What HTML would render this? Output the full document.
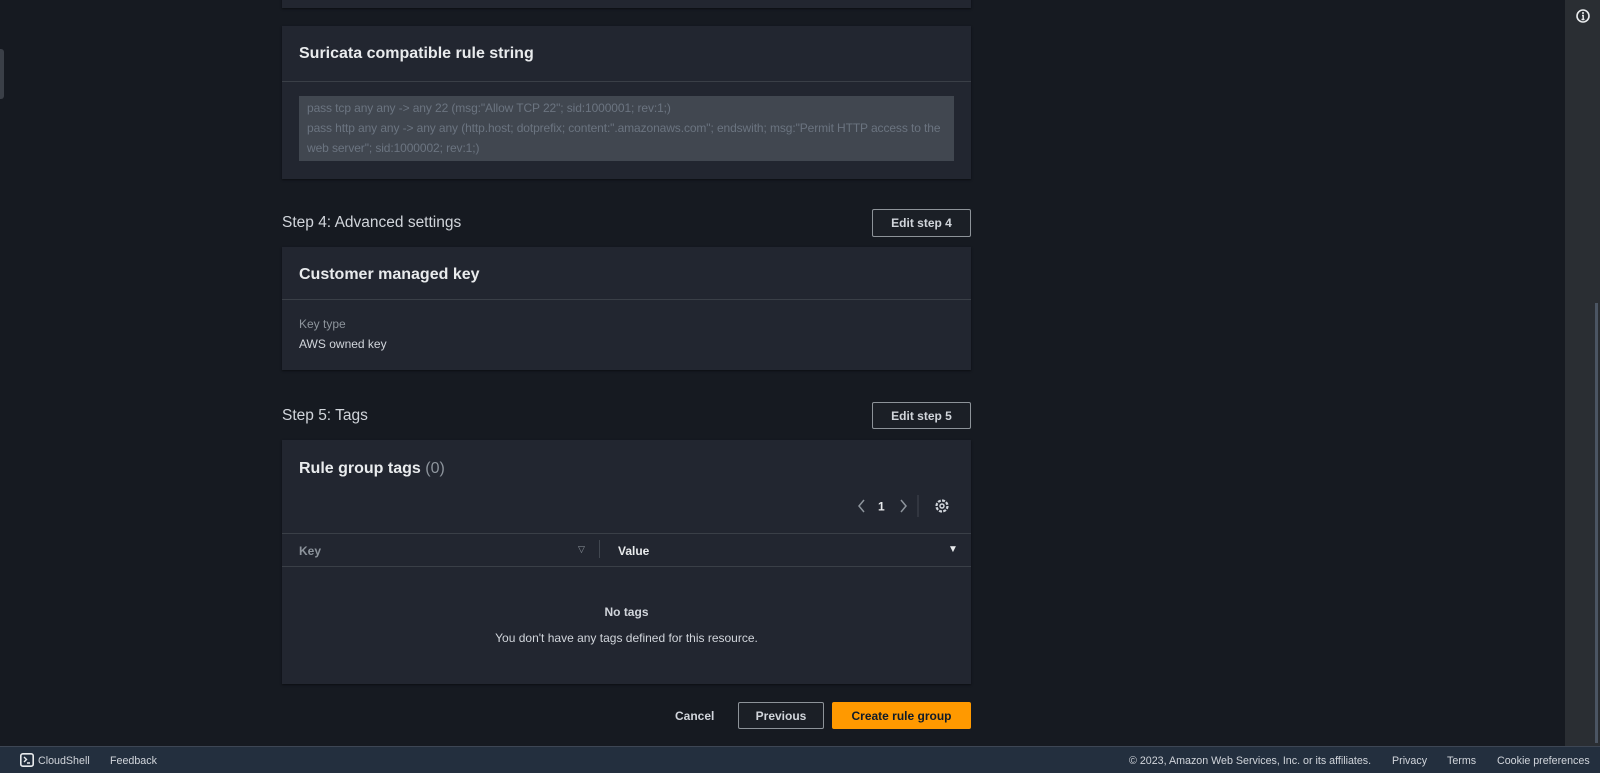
<!DOCTYPE html>
<html><head><meta charset="utf-8"><style>
*{box-sizing:border-box;margin:0;padding:0}
body{width:1600px;height:773px;overflow:hidden;background:#161a21;font-family:"Liberation Sans",sans-serif;color:#d1d5db;font-size:13px;position:relative}
.abs{position:absolute}
.card{position:absolute;left:282px;width:689px;background:#222630;box-shadow:0 1px 2px rgba(0,0,0,.5)}
.ch{position:absolute;left:17px;font-size:16px;font-weight:bold;color:#e9ebed}
.sep{position:absolute;left:0;right:0;height:1px;background:#3a3f47}
.btn{position:absolute;border:1px solid #8d9399;border-radius:2px;background:#1b1f26;color:#d1d5db;font-weight:bold;font-size:12px;display:flex;align-items:center;justify-content:center}
.step{position:absolute;left:282px;font-size:15.5px;color:#d1d5db}
.ft{position:absolute;top:755px;font-size:10.7px;color:#d1d5db}
</style></head><body>
<div class="card" style="top:-10px;height:18px"></div>
<div class="abs" style="left:0;top:49px;width:4px;height:50px;background:#3a3f47;border-radius:0 3px 3px 0"></div>

<div class="card" style="top:26px;height:153px">
<div class="ch" style="top:19px">Suricata compatible rule string</div>
<div class="sep" style="top:55px"></div>
<div class="abs" style="left:17px;top:70px;width:655px;height:65px;background:#414750;color:#6b7480;font-size:12px;letter-spacing:-0.1px;line-height:20px;padding:2px 8px">pass tcp any any -&gt; any 22 (msg:"Allow TCP 22"; sid:1000001; rev:1;)<br>pass http any any -&gt; any any (http.host; dotprefix; content:".amazonaws.com"; endswith; msg:"Permit HTTP access to the web server"; sid:1000002; rev:1;)</div>
</div>

<div class="step" style="top:214px">Step 4: Advanced settings</div>
<div class="btn" style="left:872px;top:209px;width:99px;height:28px">Edit step 4</div>
<div class="card" style="top:247px;height:123px">
<div class="ch" style="top:19px">Customer managed key</div>
<div class="sep" style="top:52px"></div>
<div class="abs" style="left:17px;top:70px;color:#8d949c;font-size:12px">Key type</div>
<div class="abs" style="left:17px;top:90px;font-size:12px;color:#d1d5db">AWS owned key</div>
</div>

<div class="step" style="top:407px">Step 5: Tags</div>
<div class="btn" style="left:872px;top:402px;width:99px;height:27px">Edit step 5</div>
<div class="card" style="top:440px;height:244px">
<div class="ch" style="top:20px">Rule group tags <span style="font-weight:normal;color:#8d949c">(0)</span></div>
<svg class="abs" style="left:573px;top:55px" width="100" height="22" viewBox="0 0 100 22"><path d="M9 5L4 11L9 17" stroke="#8d949c" stroke-width="1.5" fill="none"/><text x="23" y="15.5" fill="#e9ebed" font-size="12" font-weight="bold" font-family="Liberation Sans">1</text><path d="M46 5L51 11L46 17" stroke="#8d949c" stroke-width="1.5" fill="none"/><line x1="63" y1="0" x2="63" y2="24" stroke="#414750"/><circle cx="87" cy="11" r="5.5" stroke="#d1d5db" stroke-width="2.2" fill="none" stroke-dasharray="3 1.3"/><circle cx="87" cy="11" r="2" stroke="#d1d5db" stroke-width="1.5" fill="none"/></svg>
<div class="sep" style="top:93px"></div>
<div class="abs" style="left:17px;top:104px;font-weight:bold;font-size:12px;color:#8d949c">Key</div>
<div class="abs" style="left:296px;top:104px;font-size:9px;color:#8d949c">▽</div>
<div class="abs" style="left:317px;top:100px;width:1px;height:18px;background:#414750"></div>
<div class="abs" style="left:336px;top:104px;font-weight:bold;font-size:12px;color:#e9ebed">Value</div>
<div class="abs" style="left:666px;top:104px;font-size:10px;color:#e9ebed">▼</div>
<div class="sep" style="top:126px"></div>
<div class="abs" style="left:0;right:0;top:165px;text-align:center;font-weight:bold;font-size:12px;color:#d1d5db">No tags</div>
<div class="abs" style="left:0;right:0;top:191px;text-align:center;font-size:12px;color:#d1d5db">You don't have any tags defined for this resource.</div>
</div>

<div class="abs" style="left:675px;top:709px;font-weight:bold;font-size:12px;color:#d1d5db">Cancel</div>
<div class="btn" style="left:738px;top:702px;width:86px;height:27px">Previous</div>
<div class="abs" style="left:832px;top:702px;width:139px;height:27px;background:#ff9900;border-radius:2px;color:#0f1b2a;font-weight:bold;font-size:12px;display:flex;align-items:center;justify-content:center">Create rule group</div>

<div class="abs" style="left:1565px;top:0;width:35px;height:746px;background:#2a2e33"></div>
<svg class="abs" style="left:1575px;top:8px" width="16" height="16"><circle cx="8" cy="8" r="6" stroke="#e9ebed" stroke-width="1.6" fill="none"/><circle cx="8" cy="5" r="1" fill="#e9ebed"/><path d="M7 7.5h1.2v4M6.5 11.5h3" stroke="#e9ebed" stroke-width="1.4" fill="none"/></svg>
<div class="abs" style="left:1595px;top:303px;width:3px;height:440px;background:#4b5563"></div>

<div class="abs" style="left:0;top:746px;width:1600px;height:27px;background:#232f3e;border-top:1px solid #3d4654"></div>
<svg class="abs" style="left:20px;top:753px" width="14" height="14"><rect x="0.8" y="0.8" width="12.4" height="12.4" rx="2" stroke="#e9ebed" stroke-width="1.6" fill="none"/><path d="M4 4l2.5 2.5L4 9M7 10h3" stroke="#e9ebed" stroke-width="1.4" fill="none"/></svg>
<div class="ft" style="left:38px">CloudShell</div>
<div class="ft" style="left:110px">Feedback</div>
<div class="ft" style="left:1129px">© 2023, Amazon Web Services, Inc. or its affiliates.</div>
<div class="ft" style="left:1392px">Privacy</div>
<div class="ft" style="left:1447px">Terms</div>
<div class="ft" style="left:1497px">Cookie preferences</div>
</body></html>
